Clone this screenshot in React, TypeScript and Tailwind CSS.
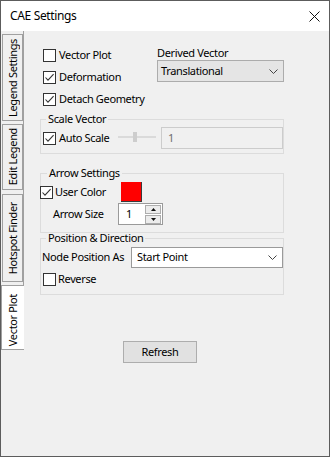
import React from "react";

const Check = ({ checked }: { checked?: boolean }) => (
  <span className="w-[13px] h-[13px] border border-[#333333] bg-white flex items-center justify-center shrink-0">
    {checked && (
      <svg width="11" height="11" viewBox="0 0 11 11">
        <path d="M1.5 5.5 L4 8.2 L9.6 2.2" stroke="#333333" strokeWidth="1.1" fill="none" />
      </svg>
    )}
  </span>
);

const Chevron = () => (
  <svg width="9" height="5" viewBox="0 0 9 5" className="shrink-0">
    <path d="M0.5 0.5 L4.5 4.5 L8.5 0.5" stroke="#444444" strokeWidth="1" fill="none" />
  </svg>
);

const Tab = ({ label, h, selected, mt }: { label: string; h: string; selected?: boolean; mt: string }) => (
  <div
    className={
      selected
        ? `${mt} ${h} w-[23px] pt-[6px] bg-white border-l border-t border-b border-[#a0a0a0] flex items-center justify-center relative z-10`
        : `${mt} ${h} ml-[1px] w-[21px] bg-[#f0f0f0] border border-[#a0a0a0] flex items-center justify-center`
    }
  >
    <span className="[writing-mode:vertical-rl] rotate-180 whitespace-nowrap leading-[14px]">{label}</span>
  </div>
);

export default function App() {
  return (
    <div
      className="w-[330px] h-[457px] border border-[#5c5c5c] bg-[#f0f0f0] flex flex-col text-[11px] tracking-[-0.35px] text-black overflow-hidden"
      style={{ fontFamily: '"Noto Sans", "Liberation Sans", sans-serif' }}
    >
      {/* Title bar */}
      <div className="h-[30px] bg-white flex items-center justify-between pl-[9px] pr-[9px] shrink-0">
        <span className="text-[12px]">CAE Settings</span>
        <svg width="11" height="11" viewBox="0 0 11 11">
          <path d="M0.5 0.5 L10.5 10.5 M10.5 0.5 L0.5 10.5" stroke="#111111" strokeWidth="1" />
        </svg>
      </div>

      <div className="flex flex-1">
        {/* Tabs */}
        <div className="w-[23px] h-[319px] border-r border-[#a0a0a0] flex flex-col shrink-0 pt-[3px]">
          <Tab label="Legend Settings" h="h-[87px]" mt="mt-0" />
          <Tab label="Edit Legend" h="h-[66px]" mt="mt-[3px]" />
          <Tab label="Hotspot Finder" h="h-[88px]" mt="mt-[4px]" />
          <Tab label="Vector Plot" h="h-[65px]" mt="mt-[3px]" selected />
        </div>

        {/* Panel */}
        <div className="flex-1 pt-[13px] flex flex-col">
          {/* Top block */}
          <div className="flex">
            <div className="ml-[19px] w-[114px] flex flex-col">
              <div className="h-[22px] flex items-center">
                <Check />
                <span className="ml-[3px]">Vector Plot</span>
              </div>
              <div className="h-[22px] flex items-center">
                <Check checked />
                <span className="ml-[3px]">Deformation</span>
              </div>
              <div className="h-[22px] flex items-center">
                <Check checked />
                <span className="ml-[3px] whitespace-nowrap">Detach Geometry</span>
              </div>
            </div>
            <div className="mt-[2px] flex flex-col">
              <div className="h-[14px] leading-[14px]">Derived Vector</div>
              <div className="w-[127px] h-[22px] bg-[#e5e5e5] border border-[#acacac] flex items-center justify-between pl-[3px] pr-[5px]">
                <span>Translational</span>
                <Chevron />
              </div>
            </div>
          </div>

          {/* Scale Vector */}
          <fieldset className="mt-[1px] ml-[16px] w-[244px] border border-[#dcdcdc] pb-[4px]">
            <legend className="ml-[5px] px-[2px] h-[16px] leading-[16px]">Scale Vector</legend>
            <div className="h-[22px] flex items-center">
              <div className="w-[77px] pl-[2px] flex items-center">
                <Check checked />
                <span className="ml-[3px]">Auto Scale</span>
              </div>
              <svg width="38" height="12" viewBox="0 0 38 12" className="shrink-0">
                <rect x="0" y="4" width="38" height="2" fill="#dadada" />
                <rect x="15" y="0" width="4" height="10" fill="#cdcdcd" />
              </svg>
              <div className="ml-[5px] w-[122px] h-[22px] border border-[#cccccc] bg-[#f0f0f0] flex items-center pl-[6px] text-[#6d6d6d]">
                1
              </div>
            </div>
          </fieldset>

          {/* Arrow Settings */}
          <fieldset className="mt-[11px] ml-[16px] w-[244px] border border-[#dcdcdc] pb-[7px]">
            <legend className="ml-[6px] px-[2px] h-[16px] leading-[16px]">Arrow Settings</legend>
            <div className="h-[22px] flex items-center">
              <div className="w-[81px] ml-[-1px] flex items-center">
                <Check checked />
                <span className="ml-[2px]">User Color</span>
              </div>
              <div className="w-[21px] h-[20px] bg-[#ff0000] border-r border-b border-[#3a3a3a]" />
            </div>
            <div className="h-[22px] flex items-center">
              <span className="ml-[12px] w-[65px]">Arrow Size</span>
              <div className="w-[45px] h-[22px] border border-[#9a9a9a] bg-white flex items-center">
                <span className="flex-1 pl-[7px]">1</span>
                <div className="flex flex-col gap-[1px] pr-[1px]">
                  <div className="w-[16px] h-[9px] border border-[#adadad] bg-[#ececec] flex items-center justify-center">
                    <svg width="5" height="3" viewBox="0 0 5 3">
                      <path d="M0 3 L2.5 0 L5 3 Z" fill="#111111" />
                    </svg>
                  </div>
                  <div className="w-[16px] h-[9px] border border-[#adadad] bg-[#ececec] flex items-center justify-center">
                    <svg width="5" height="3" viewBox="0 0 5 3">
                      <path d="M0 0 L5 0 L2.5 3 Z" fill="#111111" />
                    </svg>
                  </div>
                </div>
              </div>
            </div>
          </fieldset>

          {/* Position & Direction */}
          <fieldset className="mt-[-3px] ml-[16px] w-[244px] border border-[#dcdcdc] pb-[4px]">
            <legend className="ml-[5px] px-[2px] h-[16px] leading-[16px]">Position &amp; Direction</legend>
            <div className="h-[22px] flex items-center">
              <span className="ml-[1px] w-[89px] whitespace-nowrap">Node Position As</span>
              <div className="w-[152px] h-[21px] bg-white border border-[#9a9a9a] flex items-center justify-between pl-[5px] pr-[5px]">
                <span>Start Point</span>
                <Chevron />
              </div>
            </div>
            <div className="h-[22px] flex items-center">
              <div className="ml-[2px] flex items-center">
                <Check />
                <span className="ml-[2px]">Reverse</span>
              </div>
            </div>
          </fieldset>

          {/* Refresh */}
          <div className="mt-[46px] ml-[99px] w-[74px] h-[22px] bg-[#e1e1e1] border border-[#adadad] flex items-center justify-center">
            Refresh
          </div>
        </div>
      </div>
    </div>
  );
}
